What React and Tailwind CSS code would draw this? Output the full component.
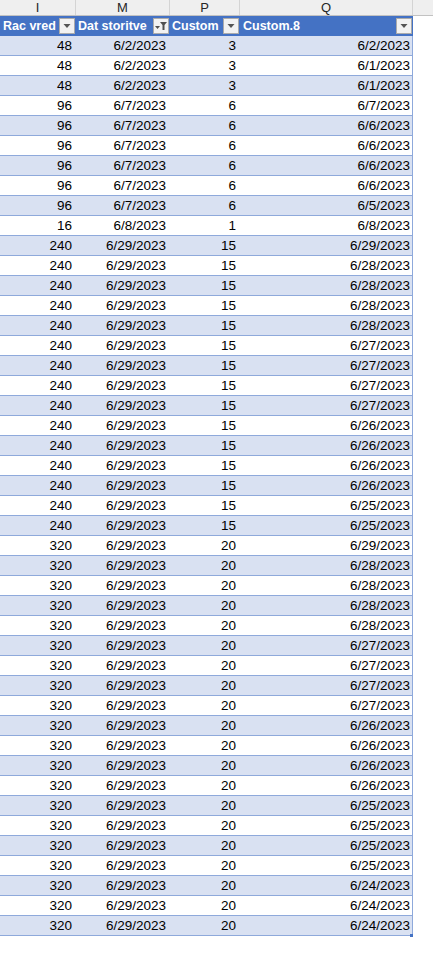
import React from "react";

const q240 = ["6/29/2023","6/28/2023","6/28/2023","6/28/2023","6/28/2023","6/27/2023","6/27/2023","6/27/2023","6/27/2023","6/26/2023","6/26/2023","6/26/2023","6/26/2023","6/25/2023","6/25/2023"];
const q320 = ["6/29/2023","6/28/2023","6/28/2023","6/28/2023","6/28/2023","6/27/2023","6/27/2023","6/27/2023","6/27/2023","6/26/2023","6/26/2023","6/26/2023","6/26/2023","6/25/2023","6/25/2023","6/25/2023","6/25/2023","6/24/2023","6/24/2023","6/24/2023"];

const rows = [
  ["48","6/2/2023","3","6/2/2023"],
  ["48","6/2/2023","3","6/1/2023"],
  ["48","6/2/2023","3","6/1/2023"],
  ["96","6/7/2023","6","6/7/2023"],
  ["96","6/7/2023","6","6/6/2023"],
  ["96","6/7/2023","6","6/6/2023"],
  ["96","6/7/2023","6","6/6/2023"],
  ["96","6/7/2023","6","6/6/2023"],
  ["96","6/7/2023","6","6/5/2023"],
  ["16","6/8/2023","1","6/8/2023"],
  ...q240.map((d) => ["240","6/29/2023","15",d]),
  ...q320.map((d) => ["320","6/29/2023","20",d]),
];

function DropBtn({ filtered }) {
  return (
    <div className="w-[16px] h-[16px] bg-[#f2f2f2] border border-[#ababab] flex items-center justify-center shrink-0">
      {filtered ? (
        <svg width="14" height="12" viewBox="0 0 14 12">
          <path d="M1 6 L6 6 L3.5 9 Z" fill="#505050" />
          <path d="M6 2 L13 2 L10.5 5 L10.5 10 L8.5 10 L8.5 5 Z" fill="#505050" />
        </svg>
      ) : (
        <svg width="10" height="6" viewBox="0 0 10 6">
          <path d="M1.5 1 L8.5 1 L5 5 Z" fill="#555" />
        </svg>
      )}
    </div>
  );
}

function HeadCell({ w, label, filtered, pl }) {
  return (
    <div className={`${w} flex items-center pr-[1px] ${pl}`}>
      <span className="flex-1 min-w-0 overflow-hidden whitespace-nowrap">{label}</span>
      <DropBtn filtered={filtered} />
    </div>
  );
}

export default function App() {
  return (
    <div className="w-[433px] h-[956px] bg-white overflow-hidden text-[13.5px] leading-none" style={{ fontFamily: '"Liberation Sans", Arial, sans-serif' }}>
      {/* column letters */}
      <div className="flex h-[16px] bg-[#efefef] border-b border-[#c2c2c2] text-[#262626] text-[13px]">
        <div className="w-[76px] border-r border-[#d4d4d4] flex items-center justify-center">I</div>
        <div className="w-[94px] border-r border-[#d4d4d4] flex items-center justify-center">M</div>
        <div className="w-[70px] border-r border-[#d4d4d4] flex items-center justify-center">P</div>
        <div className="w-[173px] border-r border-[#d4d4d4] flex items-center justify-center">Q</div>
        <div className="flex-1"></div>
      </div>
      {/* table header */}
      <div className="flex h-[20px] w-[413px] bg-[#4472c4] text-white font-bold text-[12.5px] items-center">
        <HeadCell w="w-[76px]" pl="pl-[3px]" label="Rac vred" />
        <HeadCell w="w-[94px]" pl="pl-[2px]" label="Dat storitve" filtered />
        <HeadCell w="w-[70px]" pl="pl-[2px]" label="Custom" />
        <HeadCell w="w-[173px]" pl="pl-[3px]" label="Custom.8" />
      </div>
      {/* rows */}
      <div className="w-[413px] border-r border-[#8ea9db] relative">
        {rows.map((r, i) => (
          <div
            key={i}
            className={`flex h-[20px] border-b border-[#8ea9db] items-center text-black ${i % 2 === 0 ? "bg-[#d9e1f2]" : "bg-white"}`}
          >
            <div className="w-[76px] text-right pr-[4px]">{r[0]}</div>
            <div className="w-[94px] text-right pr-[4px]">{r[1]}</div>
            <div className="w-[70px] text-right pr-[4px]">{r[2]}</div>
            <div className="w-[172px] text-right pr-[2px]">{r[3]}</div>
          </div>
        ))}
        <div className="absolute right-[-1px] bottom-[-1px] w-[3px] h-[3px] bg-[#4472c4]"></div>
      </div>
    </div>
  );
}
